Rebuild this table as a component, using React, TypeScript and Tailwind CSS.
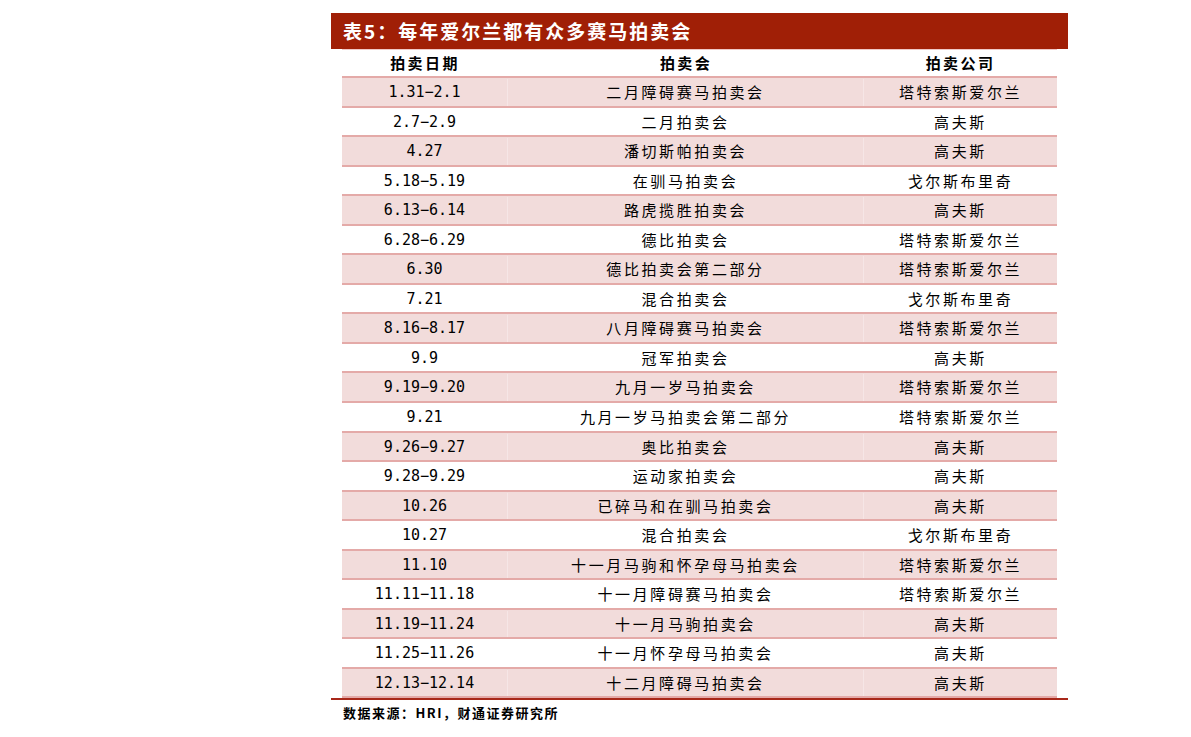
import React from "react";

const rows: [string, string, string][] = [
  ["1.31-2.1", "二月障碍赛马拍卖会", "塔特索斯爱尔兰"],
  ["2.7-2.9", "二月拍卖会", "高夫斯"],
  ["4.27", "潘切斯帕拍卖会", "高夫斯"],
  ["5.18-5.19", "在驯马拍卖会", "戈尔斯布里奇"],
  ["6.13-6.14", "路虎揽胜拍卖会", "高夫斯"],
  ["6.28-6.29", "德比拍卖会", "塔特索斯爱尔兰"],
  ["6.30", "德比拍卖会第二部分", "塔特索斯爱尔兰"],
  ["7.21", "混合拍卖会", "戈尔斯布里奇"],
  ["8.16-8.17", "八月障碍赛马拍卖会", "塔特索斯爱尔兰"],
  ["9.9", "冠军拍卖会", "高夫斯"],
  ["9.19-9.20", "九月一岁马拍卖会", "塔特索斯爱尔兰"],
  ["9.21", "九月一岁马拍卖会第二部分", "塔特索斯爱尔兰"],
  ["9.26-9.27", "奥比拍卖会", "高夫斯"],
  ["9.28-9.29", "运动家拍卖会", "高夫斯"],
  ["10.26", "已碎马和在驯马拍卖会", "高夫斯"],
  ["10.27", "混合拍卖会", "戈尔斯布里奇"],
  ["11.10", "十一月马驹和怀孕母马拍卖会", "塔特索斯爱尔兰"],
  ["11.11-11.18", "十一月障碍赛马拍卖会", "塔特索斯爱尔兰"],
  ["11.19-11.24", "十一月马驹拍卖会", "高夫斯"],
  ["11.25-11.26", "十一月怀孕母马拍卖会", "高夫斯"],
  ["12.13-12.14", "十二月障碍马拍卖会", "高夫斯"],
];

const fmtDate = (s: string) => s.replace(/-/g, "\u2212");

export default function App() {
  return (
    <div
      className="w-[1191px] h-[737px] bg-white text-black"
      style={{ fontFamily: '"Noto Sans CJK SC", sans-serif' }}
    >
      <div className="pl-[331px] pt-[13px] w-[1068px]">
        <div className="w-[737px] h-[36px] bg-[#a01f06] flex items-center pl-[12px]">
          <span className="text-white text-[19px] font-bold tracking-[2px]">
            表5：每年爱尔兰都有众多赛马拍卖会
          </span>
        </div>
        <div className="pl-[11px] w-[737px]">
          <div className="w-[715px] h-[27px] flex items-center border-t border-[#f0c8c6] text-[15px] font-bold tracking-[2.4px]">
            <div className="w-[166px] text-center">拍卖日期</div>
            <div className="w-[356px] text-center">拍卖会</div>
            <div className="flex-1 text-center">拍卖公司</div>
          </div>
          <div className="w-[715px] border-t-2 border-[#e4aaa8]">
            {rows.map((r, i) => (
              <div
                key={i}
                className={`h-[29.55px] pt-[1px] flex items-stretch border-b-2 border-[#e4aaa8] text-[15px] tracking-[2.6px] ${
                  i % 2 === 0 ? "bg-[#f2dcdb]" : "bg-white"
                }`}
              >
                <div
                  className="w-[166px] flex items-center justify-center border-r border-white/30 text-[15px] tracking-[0px]"
                  style={{ fontFamily: '"DejaVu Sans Mono", monospace' }}
                >
                  {fmtDate(r[0])}
                </div>
                <div className="w-[356px] flex items-center justify-center border-r border-white/30">
                  {r[1]}
                </div>
                <div className="flex-1 flex items-center justify-center">{r[2]}</div>
              </div>
            ))}
          </div>
        </div>
        <div className="w-[737px] h-[2px] bg-[#a8281a]" />
        <div className="pl-[12px] pt-[3px] text-[13px] font-bold tracking-[1.5px]">
          数据来源：HRI，财通证券研究所
        </div>
      </div>
    </div>
  );
}
